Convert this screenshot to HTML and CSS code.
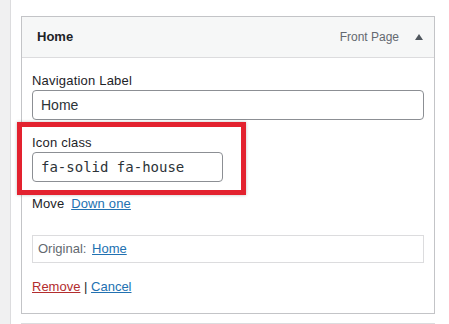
FILE: index.html
```html
<!DOCTYPE html>
<html lang="en">
<head>
<meta charset="utf-8">
<title>Menu item</title>
<link rel="stylesheet" href="styles.css">
</head>
<body>
<div class="page">
  <div class="rail"></div>
  <div class="content">
    <div class="menu-item">
      <div class="item-bar">
        <span class="item-title">Home</span>
        <span class="item-controls">
          <span class="item-type">Front Page</span>
          <svg class="toggle" width="8" height="6" viewBox="0 0 8 6"><polygon points="4,0 8,6 0,6"/></svg>
        </span>
      </div>
      <div class="item-settings">
        <div class="field">
          <label class="field-label">Navigation Label</label>
          <input class="text-input" type="text" value="Home">
        </div>
        <div class="field field-highlight">
          <label class="field-label">Icon class</label>
          <input class="text-input mono" type="text" value="fa-solid fa-house">
          <div class="annot"></div>
        </div>
        <div class="move">Move <a href="#" class="link move-link">Down one</a></div>
        <div class="original">Original: <a href="#" class="link orig-link">Home</a></div>
        <div class="actions"><a href="#" class="remove">Remove</a> | <a href="#" class="link">Cancel</a></div>
      </div>
    </div>
    <div class="menu-item next"></div>
  </div>
</div>
</body>
</html>
```
FILE: styles.css
```css
html, body {
  margin: 0;
  padding: 0;
  background: #fff;
  overflow: hidden;
}
body {
  font-family: "Liberation Sans", Arial, sans-serif;
  font-size: 13px;
  color: #1d2327;
}
.page {
  display: flex;
  height: 324px;
}
.rail {
  width: 10px;
  background: #f0f0f1;
  border-right: 1px solid #dcdcde;
}
.content {
  flex: 1;
  padding: 16px 0 0 10px;
}
.menu-item {
  width: 414px;
  box-sizing: border-box;
  border: 1px solid #c3c4c7;
  background: #fff;
}
.menu-item.next {
  margin-top: 9px;
  height: 0;
  border-width: 1px 0 0;
  border-color: #dcdcde;
}
.item-bar {
  height: 40px;
  background: #f6f7f7;
  border-bottom: 1px solid #dcdcde;
  display: flex;
  align-items: center;
  justify-content: space-between;
  padding: 0 11px 0 15px;
}
.item-title {
  font-weight: 700;
  font-size: 13px;
  line-height: 18px;
  color: #1d2327;
}
.item-controls {
  display: flex;
  align-items: center;
  gap: 16px;
}
.item-type {
  font-size: 12px;
  line-height: 18px;
  color: #646970;
}
.toggle {
  display: block;
  fill: #50575e;
  margin-top: -1px;
}
.item-settings {
  padding: 14px 10px 17px;
}
.field {
  margin-bottom: 14px;
}
.field-highlight {
  position: relative;
  margin-bottom: 13px;
}
.field-label {
  display: block;
  line-height: 18px;
  color: #1d2327;
  letter-spacing: 0.2px;
}
.text-input {
  display: block;
  width: 100%;
  height: 30px;
  box-sizing: border-box;
  border: 1px solid #8c8f94;
  border-radius: 4px;
  padding: 0 8px;
  margin: 0;
  font-family: "Liberation Sans", Arial, sans-serif;
  font-size: 14px;
  color: #2c3338;
  background: #fff;
  outline: none;
}
.text-input.mono {
  width: 191px;
  font-family: "DejaVu Sans Mono", "Liberation Mono", monospace;
  font-size: 14px;
}
.annot {
  position: absolute;
  left: -15px;
  top: -12px;
  width: 229px;
  height: 73px;
  box-sizing: border-box;
  border: 5px solid #e3222f;
  box-shadow: 0 0 3px rgba(0, 0, 0, 0.25);
  pointer-events: none;
}
.move {
  line-height: 18px;
  margin-bottom: 22px;
  letter-spacing: 0.15px;
}
.link {
  color: #2271b1;
  text-decoration: underline;
}
.move-link {
  margin-left: 3px;
}
.original {
  height: 28px;
  box-sizing: border-box;
  border: 1px solid #dcdcde;
  padding: 0 5px;
  line-height: 26px;
  color: #646970;
  margin-bottom: 15px;
}
.orig-link {
  margin-left: 2px;
}
.actions {
  line-height: 18px;
  color: #1d2327;
}
.remove {
  color: #b32d2e;
  text-decoration: underline;
}
```
